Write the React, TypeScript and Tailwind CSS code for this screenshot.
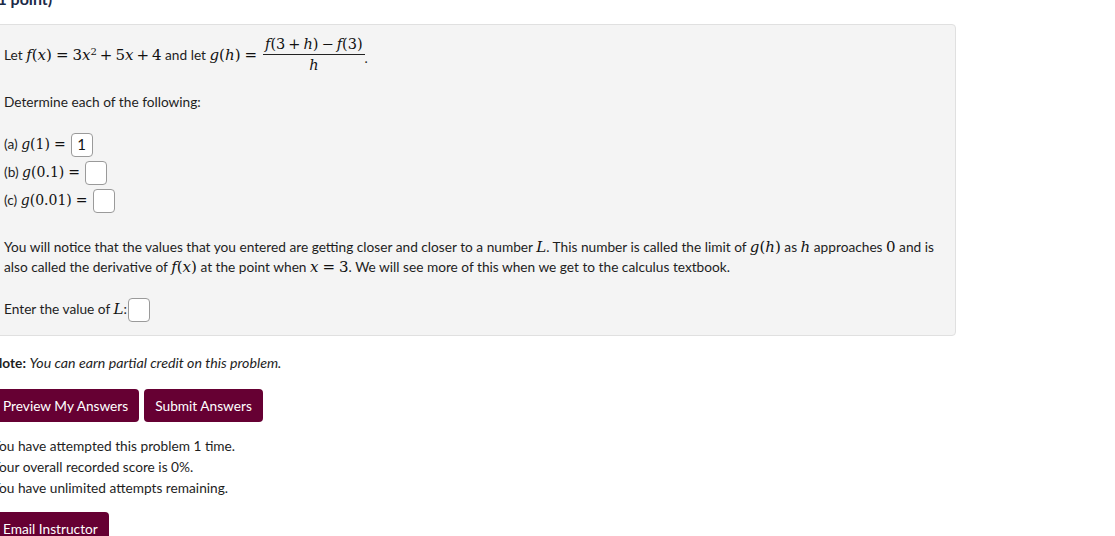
import React from "react"

const sans = "font-['Segoe_UI','Lato','Noto_Sans',sans-serif]"
const mathFont = "font-['DejaVu_Serif','Liberation_Serif',serif]"

function M({ children, small }: { children: React.ReactNode; small?: boolean }) {
  return (
    <span className={`${mathFont} ${small ? "text-[14px]" : "text-[15px]"} text-[#111]`}>{children}</span>
  )
}

function V({ children }: { children: React.ReactNode }) {
  return <i className="italic">{children}</i>
}

// relation / binary operator with KaTeX-like spacing
function Rel({ children }: { children: React.ReactNode }) {
  return <span className="mx-[4px] not-italic">{children}</span>
}
function Bin({ children }: { children: React.ReactNode }) {
  return <span className="mx-[3px] not-italic">{children}</span>
}

function AnswerBox({ value }: { value?: string }) {
  return (
    <span className="inline-flex items-center justify-center w-[22px] h-[24px] bg-white border border-[#9a9a9a] rounded-[4px] align-middle text-[15px] text-[#111] ml-[1px]">
      {value}
    </span>
  )
}

function Btn({ children }: { children: React.ReactNode }) {
  return (
    <button className="h-[33px] px-[11px] bg-[#660033] text-white text-[13.7px] rounded-[4px] leading-none">
      {children}
    </button>
  )
}

export default function App() {
  return (
    <div className={`${sans} text-[13.7px] text-[#1e1e1e] bg-white min-h-[536px] overflow-hidden`}>
      <div className="ml-[-8px] w-[964px]">
        <div className="h-[24px] -mt-[13px] font-bold text-[16px] text-[#1b2a48]">
          <span className="ml-[1px]">(1 point)</span>
        </div>

        <div className="ml-[-8px] mt-[13px] bg-[#f4f4f4] border border-[#e0e0e0] rounded-[4px] pl-[19px] pr-[19px] pt-[9px] pb-[13px]">
          <div className="flex items-center h-[42px]">
            <span>Let&nbsp;</span>
            <M>
              <V>f</V>(<V>x</V>)<Rel>=</Rel>3<V>x</V>
              <sup className="text-[10px]">2</sup>
              <Bin>+</Bin>5<V>x</V>
              <Bin>+</Bin>4
            </M>
            <span>&nbsp;and let&nbsp;</span>
            <M>
              <V>g</V>(<V>h</V>)<Rel>=</Rel>
            </M>
            <span className={`${mathFont} inline-flex flex-col items-center text-[14.5px] text-[#111] ml-[2px]`}>
              <span className="leading-[19px] px-[2px]">
                <V>f</V>(3<Bin>+</Bin>
                <V>h</V>)<Bin>−</Bin>
                <V>f</V>(3)
              </span>
              <span className="w-full border-t border-[#222]"></span>
              <span className="leading-[20px]">
                <V>h</V>
              </span>
            </span>
            <span className="self-center mt-[6px]">.</span>
          </div>

          <p className="mt-[16px] leading-[20px]">Determine each of the following:</p>

          <div className="mt-[20px] flex flex-col gap-[3px]">
            <div className="flex items-center h-[25px]">
              <span>(a)&nbsp;</span>
              <M small>
                <V>g</V>(1)<Rel>=</Rel>
              </M>
              <AnswerBox value="1" />
            </div>
            <div className="flex items-center h-[25px]">
              <span>(b)&nbsp;</span>
              <M small>
                <V>g</V>(0.1)<Rel>=</Rel>
              </M>
              <AnswerBox />
            </div>
            <div className="flex items-center h-[25px]">
              <span>(c)&nbsp;</span>
              <M small>
                <V>g</V>(0.01)<Rel>=</Rel>
              </M>
              <AnswerBox />
            </div>
          </div>

          <p className="mt-[24px] leading-[20px]">
            You will notice that the values that you entered are getting closer and closer to a number{" "}
            <M>
              <V>L</V>
            </M>
            . This number is called the limit of{" "}
            <M>
              <V>g</V>(<V>h</V>)
            </M>{" "}
            as{" "}
            <M>
              <V>h</V>
            </M>{" "}
            approaches <M>0</M> and is also called the derivative of{" "}
            <M>
              <V>f</V>(<V>x</V>)
            </M>{" "}
            at the point when{" "}
            <M>
              <V>x</V>
              <Rel>=</Rel>3
            </M>
            . We will see more of this when we get to the calculus textbook.
          </p>

          <div className="mt-[20px] flex items-center h-[25px]">
            <span>Enter the value of&nbsp;</span>
            <M>
              <V>L</V>
            </M>
            <span>:</span>
            <AnswerBox />
          </div>
        </div>

        <p className="mt-[17px] leading-[20px]">
          <b className="font-bold">Note:</b>{" "}
          <i className="italic text-[14.2px]">You can earn partial credit on this problem.</i>
        </p>

        <div className="mt-[16px] flex gap-[5px]">
          <Btn>Preview My Answers</Btn>
          <Btn>Submit Answers</Btn>
        </div>

        <div className="mt-[13px] leading-[21px]">
          <p>You have attempted this problem 1 time.</p>
          <p>Your overall recorded score is 0%.</p>
          <p>You have unlimited attempts remaining.</p>
        </div>

        <div className="mt-[14px]">
          <Btn>Email Instructor</Btn>
        </div>
      </div>
    </div>
  )
}
